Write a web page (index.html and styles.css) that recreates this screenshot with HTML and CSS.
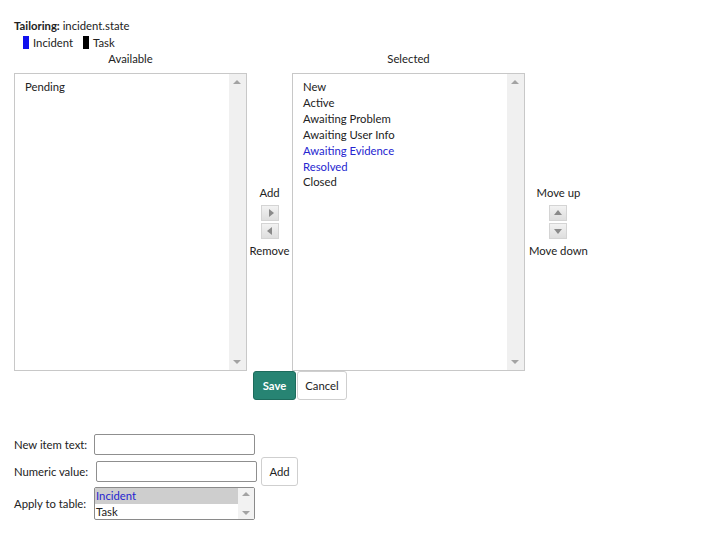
FILE: index.html
```html
<!DOCTYPE html>
<html lang="en">
<head>
<meta charset="UTF-8">
<title>Tailoring: incident.state</title>
<link rel="stylesheet" href="styles.css">
</head>
<body>

<div class="page">
    <div class="tailoring"><b>Tailoring:</b> incident.state</div>
    <div class="legend">
        <span class="swatch swatch-blue"></span>Incident
        <span class="swatch swatch-black"></span>Task
    </div>

    <table class="bucket">
        <tr>
            <th class="col-list">Available</th>
            <th class="col-mid"></th>
            <th class="col-list">Selected</th>
            <th></th>
        </tr>
        <tr>
            <td>
                <div class="list">
                    <div class="items">
                        <div>Pending</div>
                    </div>
                    <div class="scroll"><span class="up"></span><span class="down"></span></div>
                </div>
            </td>
            <td class="mover">
                <div>Add</div>
                <button class="arrow"><span class="tri-right"></span></button>
                <button class="arrow"><span class="tri-left"></span></button>
                <div>Remove</div>
            </td>
            <td>
                <div class="list">
                    <div class="items">
                        <div>New</div>
                        <div>Active</div>
                        <div>Awaiting Problem</div>
                        <div>Awaiting User Info</div>
                        <div class="incident">Awaiting Evidence</div>
                        <div class="incident">Resolved</div>
                        <div>Closed</div>
                    </div>
                    <div class="scroll"><span class="up"></span><span class="down"></span></div>
                </div>
            </td>
            <td class="mover mover-order">
                <div>Move up</div>
                <button class="arrow"><span class="tri-up"></span></button>
                <button class="arrow"><span class="tri-down"></span></button>
                <div>Move down</div>
            </td>
        </tr>
        <tr>
            <td></td>
            <td colspan="2" class="actions">
                <button class="btn btn-save">Save</button><button class="btn btn-cancel">Cancel</button>
            </td>
            <td></td>
        </tr>
    </table>

    <div class="new-item">
        <div class="row">
            <label class="lbl" for="item-text">New item text:</label>
            <input type="text" id="item-text" class="field">
        </div>
        <div class="row row-num">
            <label class="lbl" for="item-value">Numeric value:</label>
            <input type="text" id="item-value" class="field">
            <button class="btn btn-add">Add</button>
        </div>
        <div class="row">
            <label class="lbl">Apply to table:</label>
            <div class="tables">
                <div class="options">
                    <div class="opt opt-selected">Incident</div>
                    <div class="opt">Task</div>
                </div>
                <div class="scroll scroll-small"><span class="up"></span><span class="down"></span></div>
            </div>
        </div>
    </div>
</div>

</body>
</html>
```

FILE: styles.css
```css
body {
    margin: 0;
    font-family: Lato, "Open Sans", sans-serif;
    font-size: 11.3px;
    color: #222;
    background: #fff;
}
.page {
    padding: 18px 0 0 14px;
}
.tailoring {
    line-height: 16px;
}
.legend {
    display: flex;
    align-items: center;
    height: 15px;
    margin-top: 1px;
    padding-left: 9px;
}
.swatch {
    display: inline-block;
    width: 6px;
    height: 13px;
    margin-right: 4px;
}
.swatch-blue {
    background: #1010ee;
}
.swatch-black {
    background: #000;
    margin-left: 10px;
}
.bucket {
    border-collapse: collapse;
    margin-top: 1px;
}
.bucket td, .bucket th {
    padding: 0;
    vertical-align: middle;
}
.bucket th {
    font-weight: normal;
    height: 16px;
    line-height: 16px;
    padding-bottom: 6px;
}
.col-list {
    width: 233px;
}
.col-mid {
    width: 45px;
}
.list {
    display: flex;
    width: 231px;
    height: 296px;
    border: 1px solid #c8c8c8;
    box-sizing: content-box;
}
.items {
    flex: 1;
    padding: 5px 10px;
    line-height: 15.9px;
}
.incident {
    color: #2525d0;
}
.scroll {
    position: relative;
    width: 17px;
    background: #f0f0f0;
}
.up, .down {
    position: absolute;
    left: 4px;
    width: 0;
    height: 0;
    border-left: 4px solid transparent;
    border-right: 4px solid transparent;
}
.up {
    top: 6px;
    border-bottom: 4px solid #a3a3a3;
}
.down {
    bottom: 6px;
    border-top: 4px solid #a3a3a3;
}
.mover {
    text-align: center;
    line-height: 16px;
}
.mover div:first-child {
    margin-bottom: 4px;
}
.mover div:last-child {
    margin-top: 4px;
}
.mover-order {
    padding: 0 4px !important;
}
.arrow {
    display: block;
    position: relative;
    width: 18px;
    height: 16px;
    margin: 2px auto 2px;
    padding: 0;
    border: 1px solid #d4d4d4;
    background: linear-gradient(#f2f2f2, #dedede);
}
.arrow span {
    position: absolute;
    width: 0;
    height: 0;
}
.tri-right {
    left: 7px;
    top: 3px;
    border-top: 4px solid transparent;
    border-bottom: 4px solid transparent;
    border-left: 5px solid #8a8a8a;
}
.tri-left {
    left: 5px;
    top: 3px;
    border-top: 4px solid transparent;
    border-bottom: 4px solid transparent;
    border-right: 5px solid #8a8a8a;
}
.tri-up {
    left: 4px;
    top: 4px;
    border-left: 4px solid transparent;
    border-right: 4px solid transparent;
    border-bottom: 5px solid #8a8a8a;
}
.tri-down {
    left: 4px;
    top: 5px;
    border-left: 4px solid transparent;
    border-right: 4px solid transparent;
    border-top: 5px solid #8a8a8a;
}
.actions {
    padding-left: 6px !important;
}
.btn {
    font-family: inherit;
    font-size: 11.3px;
    height: 29px;
    border-radius: 3px;
    cursor: pointer;
    vertical-align: top;
}
.btn-save {
    width: 43px;
    background: #278473;
    border: 1px solid #1d6b5c;
    color: #fff;
    font-weight: bold;
}
.btn-cancel {
    width: 50px;
    background: #fff;
    border: 1px solid #cfcfcf;
    color: #222;
    margin-left: 1px;
}
.new-item {
    margin-top: 34px;
}
.row {
    display: flex;
    align-items: center;
}
.lbl {
    width: 80px;
}
.field {
    width: 161px;
    height: 21px;
    box-sizing: border-box;
    border: 1px solid #8f8f8f;
    border-radius: 2px;
    margin: 0;
}
.row-num {
    margin-top: 2px;
}
.row-num .lbl {
    width: 82px;
}
.btn-add {
    width: 37px;
    height: 29px;
    margin-left: 4px;
    background: #fff;
    border: 1px solid #cfcfcf;
    color: #222;
}
.tables {
    display: flex;
    width: 161px;
    height: 33px;
    box-sizing: border-box;
    border: 1px solid #8a8a8a;
    border-radius: 2px;
    margin-top: 1px;
}
.options {
    flex: 1;
    line-height: 16px;
}
.opt {
    padding-left: 1px;
}
.opt-selected {
    background: #cecece;
    color: #2525d0;
}
.scroll-small {
    width: 16px;
    background: #f2f2f2;
}
.scroll-small .up {
    top: 4px;
}
.scroll-small .down {
    bottom: 4px;
}
```
